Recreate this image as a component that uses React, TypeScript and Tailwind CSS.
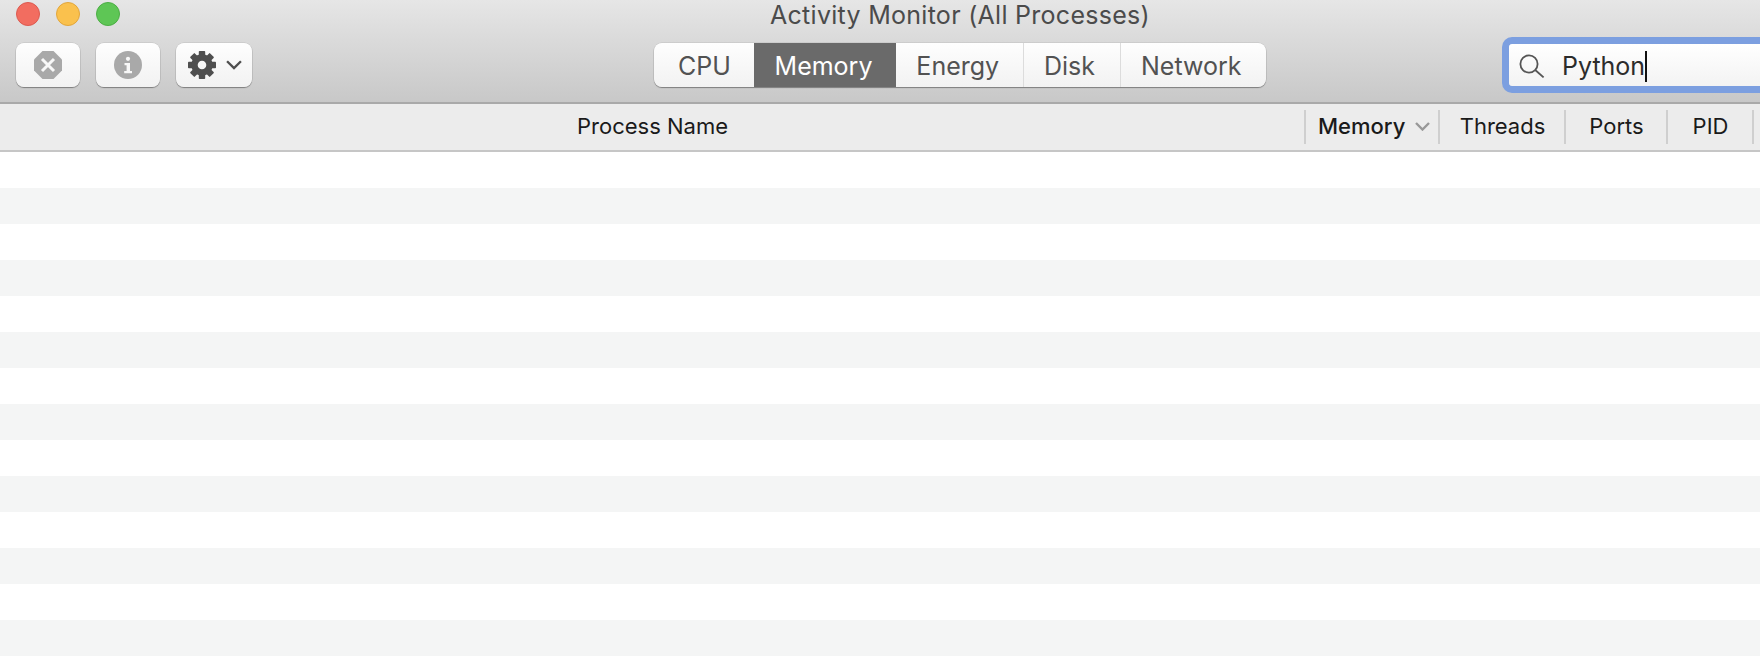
const TABS = [
  { label: 'CPU', width: 'w-[100px]', inset: 'pl-[1px]' },
  { label: 'Memory', width: 'w-[142px]', inset: 'pr-[3px]', active: true },
  { label: 'Energy', width: 'w-[126.5px]', inset: 'pr-[3px]' },
  { label: 'Disk', width: 'w-[97px]', inset: 'pr-[4px]' },
  { label: 'Network', width: 'w-[146.5px]', inset: 'pr-[4px]' },
]

const COLUMNS = [
  { label: 'Threads', width: 'w-[126px]' },
  { label: 'Ports', width: 'w-[102px]' },
  { label: 'PID', width: 'w-[86px]' },
]

function ToolButton({ width, children }: { width: string; children: React.ReactNode }) {
  return (
    <button className={`${width} h-[44px] flex items-center justify-center rounded-[8px] bg-gradient-to-b from-[#fefefe] to-[#f2f2f2] shadow-[0_1px_1px_rgba(0,0,0,0.35),0_0_0_0.5px_rgba(0,0,0,0.12)]`}>
      {children}
    </button>
  )
}

function StopIcon() {
  return (
    <svg width="28" height="28" viewBox="0 0 28 28">
      <polygon points="8.5,0 19.5,0 28,8.5 28,19.5 19.5,28 8.5,28 0,19.5 0,8.5" fill="#a9a9a9" />
      <path d="M8 8 L20 20 M20 8 L8 20" stroke="#f8f8f8" strokeWidth="3" />
    </svg>
  )
}

function InfoIcon() {
  return (
    <svg width="28" height="28" viewBox="0 0 28 28">
      <circle cx="14" cy="14" r="14" fill="#a9a9a9" />
      <circle cx="14" cy="7.8" r="2.1" fill="#f8f8f8" />
      <path d="M10.5 12 H16 V20 H18 V22.2 H10.2 V20 H12.6 V14.2 H10.5 Z" fill="#f8f8f8" />
    </svg>
  )
}

function GearIcon() {
  const teeth = [0, 45, 90, 135, 180, 225, 270, 315]
  return (
    <svg width="28" height="28" viewBox="0 0 28 28">
      {teeth.map((a) => (
        <rect key={a} x="10.8" y="0" width="6.4" height="7" rx="0.8" fill="#4f4f4f" transform={`rotate(${a} 14 14)`} />
      ))}
      <circle cx="14" cy="14" r="7.5" fill="none" stroke="#4f4f4f" strokeWidth="6.4" />
    </svg>
  )
}

function SearchIcon() {
  return (
    <svg width="26" height="24" viewBox="0 0 26 24" fill="none" stroke="#555555" strokeWidth="1.8">
      <circle cx="10" cy="10" r="8.6" />
      <path d="M16.2 16 L24.6 23.4" />
    </svg>
  )
}

function Chevron({ className, color, stroke }: { className: string; color: string; stroke: string }) {
  return (
    <svg className={className} viewBox="0 0 15 9" fill="none">
      <path d="M1 1 L7.5 7.5 L14 1" stroke={color} strokeWidth={stroke} />
    </svg>
  )
}

export default function App() {
  return (
    <div className="w-[1760px] h-[668px] overflow-hidden bg-white font-['Inter',sans-serif]">
      {/* toolbar */}
      <div className="h-[104px] bg-gradient-to-b from-[#e6e6e6] to-[#c8c8c8] border-b-2 border-[#a9a9a9]">
        <div className="h-[43px] flex">
          <div className="w-[770px] flex gap-4 pl-4 pt-[2px]">
            <span className="w-6 h-6 rounded-full bg-[#f26d60] border border-[#dc5a50]" />
            <span className="w-6 h-6 rounded-full bg-[#fac14d] border border-[#e2a63c]" />
            <span className="w-6 h-6 rounded-full bg-[#5ec655] border border-[#4cae44]" />
          </div>
          <div className="text-[25px] leading-[30px] text-[#4b4b4b] tracking-[0.28px]">Activity Monitor (All Processes)</div>
        </div>
        <div className="grid grid-cols-[654px_848px_300px]">
          <div className="flex gap-4 pl-4">
            <ToolButton width="w-16"><StopIcon /></ToolButton>
            <ToolButton width="w-16"><InfoIcon /></ToolButton>
            <ToolButton width="w-[76px]">
              <span className="flex items-center gap-[10px] pl-[2px]">
                <GearIcon />
                <Chevron className="w-4 h-[10px]" color="#4f4f4f" stroke="2.2" />
              </span>
            </ToolButton>
          </div>
          <div className="flex">
            <div className="flex h-[44px] rounded-[8px] overflow-hidden bg-gradient-to-b from-[#fefefe] to-[#f2f2f2] shadow-[0_1px_1px_rgba(0,0,0,0.35),0_0_0_0.5px_rgba(0,0,0,0.12)]">
              {TABS.map((tab, i) => (
                <div
                  key={tab.label}
                  className={`${tab.width} ${tab.inset} pt-[3px] flex items-center justify-center text-[25px] ${
                    tab.active
                      ? 'bg-[#6a6a6a] text-white'
                      : `text-[#525252] ${i > 2 ? 'border-l border-[#dcdcdc]' : ''}`
                  }`}
                >
                  {tab.label}
                </div>
              ))}
            </div>
          </div>
          <div className="-mt-[6px] h-[56px] w-[300px] rounded-[10px] border-[7px] border-r-0 border-[#7c9fe0] bg-gradient-to-b from-[#ffffff] to-[#f3f3f3] flex items-center">
            <span className="ml-[10px] mt-[1px]"><SearchIcon /></span>
            <span className="ml-[17px] mt-[2px] text-[25px] text-[#2c2c2c] border-r-2 border-[#111111] leading-[31px]">Python</span>
          </div>
        </div>
      </div>

      {/* column headers */}
      <div className="h-[48px] pb-[1px] bg-[#ececec] border-b-2 border-[#c6c6c6] flex items-center text-[22px] text-[#1a1a1a]">
        <div className="w-[1304px] pl-[577px]">Process Name</div>
        <div className="w-[134px] h-[34px] border-l-2 border-[#cfcfcf] flex items-center pl-[12px] font-medium">
          Memory
          <Chevron className="ml-[10px] w-[15px] h-[9px]" color="#989898" stroke="2.4" />
        </div>
        {COLUMNS.map((col) => (
          <div key={col.label} className={`${col.width} h-[34px] pl-[1px] border-l-2 border-[#cfcfcf] flex items-center justify-center`}>
            {col.label}
          </div>
        ))}
        <div className="h-[34px] border-l-2 border-[#cfcfcf]" />
      </div>

      {/* rows */}
      {Array.from({ length: 14 }).map((_, i) => (
        <div key={i} className={`h-9 ${i % 2 === 1 ? 'bg-[#f4f5f5]' : 'bg-white'}`} />
      ))}
    </div>
  )
}
